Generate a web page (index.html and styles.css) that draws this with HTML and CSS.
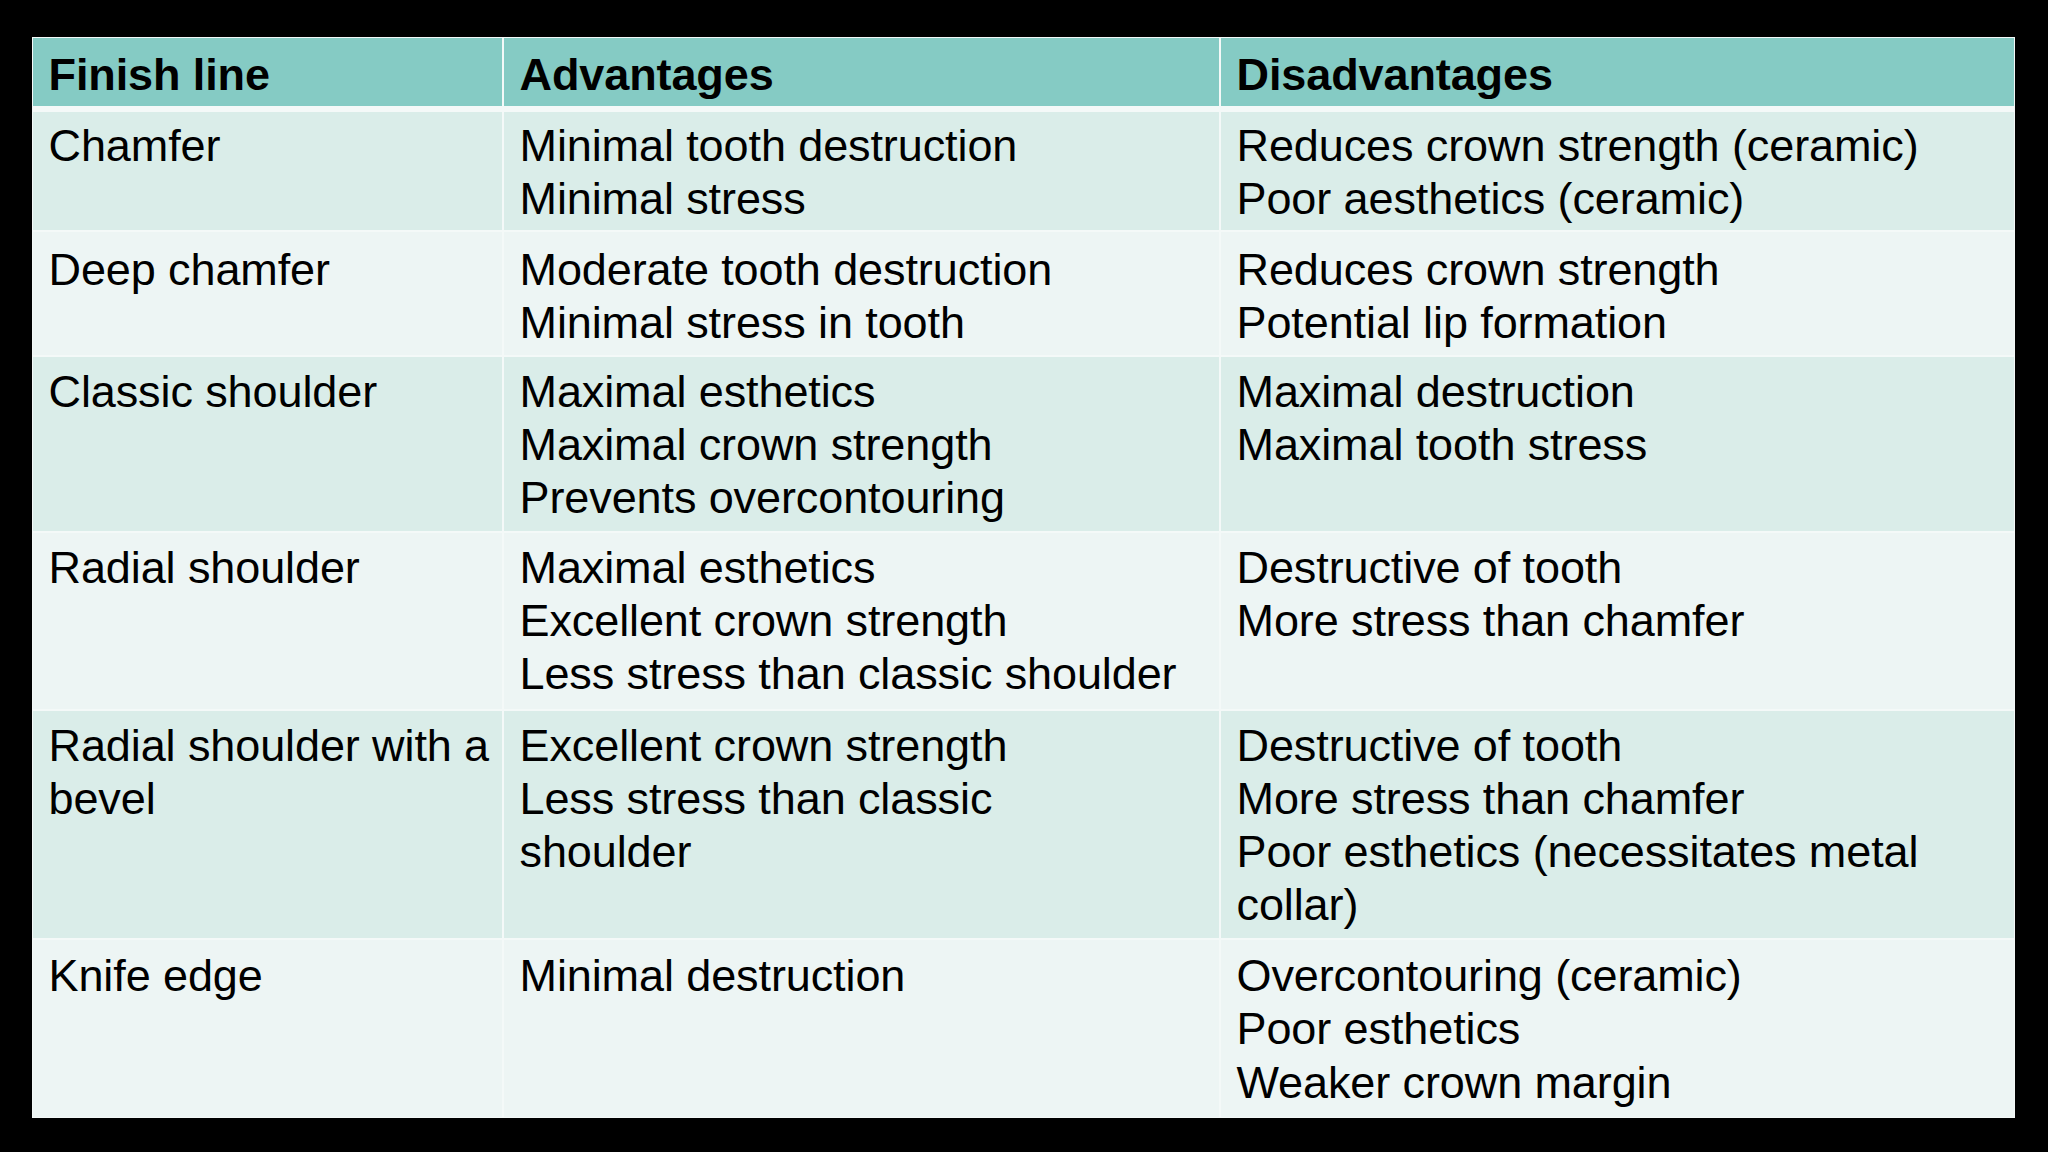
FILE: index.html
```html
<!DOCTYPE html>
<html lang="en">
<head>
<meta charset="utf-8">
<title>Finish lines</title>
<link rel="stylesheet" href="styles.css">
</head>
<body>
<div class="slide">
  <div class="table">
    <div class="row head">
      <div class="cell">Finish line</div>
      <div class="cell">Advantages</div>
      <div class="cell">Disadvantages</div>
    </div>
    <div class="row odd first">
      <div class="cell">Chamfer</div>
      <div class="cell">Minimal tooth destruction<br>Minimal stress</div>
      <div class="cell">Reduces crown strength (ceramic)<br>Poor aesthetics (ceramic)</div>
    </div>
    <div class="row even second">
      <div class="cell">Deep chamfer</div>
      <div class="cell">Moderate tooth destruction<br>Minimal stress in tooth</div>
      <div class="cell">Reduces crown strength<br>Potential lip formation</div>
    </div>
    <div class="row odd">
      <div class="cell">Classic shoulder</div>
      <div class="cell">Maximal esthetics<br>Maximal crown strength<br>Prevents overcontouring</div>
      <div class="cell">Maximal destruction<br>Maximal tooth stress</div>
    </div>
    <div class="row even">
      <div class="cell">Radial shoulder</div>
      <div class="cell">Maximal esthetics<br>Excellent crown strength<br>Less stress than classic shoulder</div>
      <div class="cell">Destructive of tooth<br>More stress than chamfer</div>
    </div>
    <div class="row odd">
      <div class="cell">Radial shoulder with a<br>bevel</div>
      <div class="cell">Excellent crown strength<br>Less stress than classic<br>shoulder</div>
      <div class="cell">Destructive of tooth<br>More stress than chamfer<br>Poor esthetics (necessitates metal<br>collar)</div>
    </div>
    <div class="row even last">
      <div class="cell">Knife edge</div>
      <div class="cell">Minimal destruction</div>
      <div class="cell">Overcontouring (ceramic)<br>Poor esthetics<br>Weaker crown margin</div>
    </div>
  </div>
</div>
</body>
</html>
```

FILE: styles.css
```css
html, body {
  margin: 0;
  padding: 0;
  background: #000;
}

body {
  width: 2048px;
  height: 1152px;
  overflow: hidden;
  font-family: "Liberation Sans", Arial, sans-serif;
  color: #000;
}

.slide {
  padding: 37px 0 0 32px;
}

.table {
  display: grid;
  width: 1981px;
  grid-template-columns: 469px 715px 793px;
  grid-template-rows: 72px 118px 123px 174px 176px 227px 177px;
  column-gap: 2px;
  row-gap: 2px;
  padding: 1px;
  background: #f4f9f8;
}

.row {
  display: contents;
}

.cell {
  padding: 7.5px 6px 0 15.5px;
  font-size: 45px;
  line-height: 53.3px;
  letter-spacing: -0.1px;
  white-space: nowrap;
}

.head .cell {
  background: #85cbc4;
  font-weight: bold;
  padding-top: 9.5px;
  margin-bottom: 4px;
}

.first .cell {
  padding-top: 6.5px;
}

.second .cell {
  padding-top: 10.5px;
}

.last .cell {
  padding-top: 9px;
}

.odd .cell {
  background: #daede9;
}

.even .cell {
  background: #edf5f4;
}
```
